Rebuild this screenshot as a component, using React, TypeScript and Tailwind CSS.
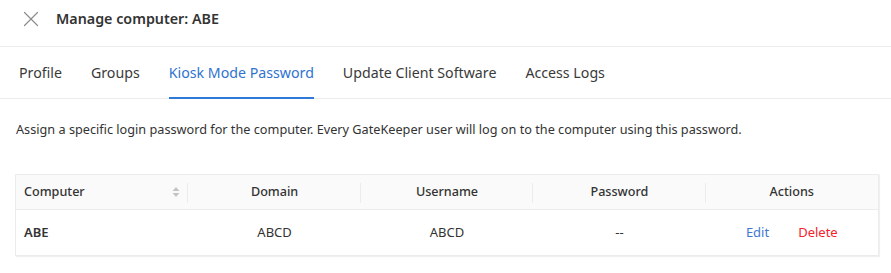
import { X } from "lucide-react";

const tabs = ["Profile", "Groups", "Kiosk Mode Password", "Update Client Software", "Access Logs"];
const cols = ["Domain", "Username", "Password", "Actions"];

export default function App() {
  return (
    <div
      className="w-[891px] h-[273px] bg-white text-[#333] overflow-hidden"
      style={{ fontFamily: '"Noto Sans", "Open Sans", sans-serif' }}
    >
      <div className="h-[47px] flex items-start pt-[9px] border-b border-[#ececec] pl-[18px]">
        <X className="w-[26px] h-[26px] -mt-[3px] text-[#8c8c8c]" strokeWidth={1.1} />
        <h1 className="ml-[12px] text-[14.3px] leading-[20px] font-semibold text-[#333]">Manage computer: ABE</h1>
      </div>

      <div className="flex h-[52px] border-b border-[#ececec] px-[19px] gap-[29px]">
        {tabs.map((t, i) => (
          <div
            key={t}
            className={
              "flex items-center pt-[2px] text-[14.2px] border-b-2 -mb-px " +
              (i === 2 ? "text-[#2f73d0] border-[#3079d6]" : "text-[#3a3a3a] border-transparent")
            }
          >
            {t}
          </div>
        ))}
      </div>

      <p className="px-[16px] pt-[21px] text-[12.7px] text-[#333]">
        Assign a specific login password for the computer. Every GateKeeper user will log on to the computer using this password.
      </p>

      <div className="mx-[15px] mt-[35px] w-[864px] border border-[#ececec] shadow-[1px_1px_1px_rgba(0,0,0,0.06)]">
        <div className="grid grid-cols-5 h-[35px] bg-[#fafafa] border-b border-[#ececec] text-[12.6px] font-medium text-[#333]">
          <div className="flex items-center justify-between pl-[8px] pr-[8px] relative">
            <span>Computer</span>
            <svg width="8" height="12" viewBox="0 0 8 12" className="text-[#c4c4c4]">
              <path d="M4 1 L7.5 5 H0.5 Z" fill="currentColor" />
              <path d="M4 11 L7.5 7 H0.5 Z" fill="currentColor" />
            </svg>
            <span className="absolute right-0 top-[8px] h-[20px] w-px bg-[#ececec]" />
          </div>
          {cols.map((c, i) => (
            <div key={c} className="flex items-center justify-center relative">
              {c}
              {i < 3 && <span className="absolute right-0 top-[8px] h-[20px] w-px bg-[#ececec]" />}
            </div>
          ))}
        </div>
        <div className="grid grid-cols-5 h-[45px] text-[13px] text-[#333]">
          <div className="flex items-center pl-[8px] font-semibold">ABE</div>
          <div className="flex items-center justify-center">ABCD</div>
          <div className="flex items-center justify-center">ABCD</div>
          <div className="flex items-center justify-center">--</div>
          <div className="flex items-center justify-center gap-[29px]">
            <span className="text-[#3f78d2]">Edit</span>
            <span className="text-[#f5222d]">Delete</span>
          </div>
        </div>
      </div>
    </div>
  );
}
